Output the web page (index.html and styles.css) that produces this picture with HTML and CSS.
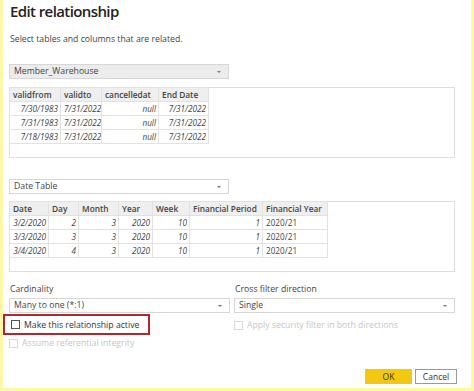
FILE: index.html
```html
<!DOCTYPE html>
<html lang="en">

<head>
  <meta charset="UTF-8">
  <meta name="viewport" content="width=device-width, initial-scale=1.0">
  <title>Edit relationship</title>
  <link rel="stylesheet" href="styles.css">
</head>

<body>
  <div class="dialog">
    <h1>Edit relationship</h1>
    <p class="intro">Select tables and columns that are related.</p>

    <div class="select select-grey">Member_Warehouse<span class="arrow"></span></div>
    <div class="preview preview-one">
      <table class="grid grid-one">
        <tr>
          <th>validfrom</th>
          <th>validto</th>
          <th>cancelledat</th>
          <th>End Date</th>
        </tr>
        <tr>
          <td class="num">7/30/1983</td>
          <td class="num">7/31/2022</td>
          <td class="num">null</td>
          <td class="num">7/31/2022</td>
        </tr>
        <tr>
          <td class="num">7/31/1983</td>
          <td class="num">7/31/2022</td>
          <td class="num">null</td>
          <td class="num">7/31/2022</td>
        </tr>
        <tr>
          <td class="num">7/18/1983</td>
          <td class="num">7/31/2022</td>
          <td class="num">null</td>
          <td class="num">7/31/2022</td>
        </tr>
      </table>
    </div>

    <div class="select select-second">Date Table<span class="arrow"></span></div>
    <div class="preview preview-two">
      <table class="grid grid-two">
        <tr>
          <th>Date</th>
          <th>Day</th>
          <th>Month</th>
          <th>Year</th>
          <th>Week</th>
          <th>Financial Period</th>
          <th>Financial Year</th>
        </tr>
        <tr>
          <td class="num">3/2/2020</td>
          <td class="num">2</td>
          <td class="num">3</td>
          <td class="num">2020</td>
          <td class="num">10</td>
          <td class="num">1</td>
          <td>2020/21</td>
        </tr>
        <tr>
          <td class="num">3/3/2020</td>
          <td class="num">3</td>
          <td class="num">3</td>
          <td class="num">2020</td>
          <td class="num">10</td>
          <td class="num">1</td>
          <td>2020/21</td>
        </tr>
        <tr>
          <td class="num">3/4/2020</td>
          <td class="num">4</td>
          <td class="num">3</td>
          <td class="num">2020</td>
          <td class="num">10</td>
          <td class="num">1</td>
          <td>2020/21</td>
        </tr>
      </table>
    </div>

    <div class="options">
      <div class="option-col">
        <div class="label">Cardinality</div>
        <div class="select">Many to one (*:1)<span class="arrow"></span></div>
        <div class="highlight">
          <span class="check"></span>Make this relationship active
        </div>
        <div class="check-row disabled">
          <span class="check"></span>Assume referential integrity
        </div>
      </div>
      <div class="option-col">
        <div class="label">Cross filter direction</div>
        <div class="select">Single<span class="arrow"></span></div>
        <div class="check-row disabled security">
          <span class="check"></span>Apply security filter in both directions
        </div>
      </div>
    </div>

    <div class="buttons">
      <button class="btn btn-ok">OK</button>
      <button class="btn btn-cancel">Cancel</button>
    </div>
  </div>
</body>

</html>
```

FILE: styles.css
```css
body {
  margin: 0;
  font-family: "Open Sans", "Noto Sans", Arial, sans-serif;
  background-color: #fff;
  color: #333;
}

.dialog {
  width: 474px;
  height: 391px;
  box-sizing: border-box;
  border-left: 3px solid #fdf7a6; /* light yellow frame */
  border-right: 3px solid #fdf7a6;
  border-bottom: 3px solid #fdf7a6;
  padding: 0 17px 0 6px;
}

h1 {
  margin: 0;
  padding: 1px 0 0 1px;
  font-size: 15px;
  font-weight: 600;
  letter-spacing: -0.6px;
  line-height: 21px;
  color: #222;
}

.intro {
  margin: 10px 0 0 1px;
  font-size: 8.7px;
  line-height: 14px;
  color: #444;
}

.select {
  position: relative;
  width: 220px;
  height: 15px;
  box-sizing: border-box;
  border: 1px solid #d6d6d6;
  background-color: #fff;
  padding-left: 4px;
  font-size: 8.7px;
  line-height: 13px;
  color: #444;
}

.select-grey {
  margin-top: 18px;
  background-color: #ececec;
}

.select-second {
  margin-top: 21px;
}

.arrow {
  position: absolute;
  right: 7px;
  top: 6px;
  border-left: 2px solid transparent;
  border-right: 2px solid transparent;
  border-top: 2px solid #777;
}

.preview {
  width: 446px;
  box-sizing: border-box;
  border: 1px solid #dedede;
}

.preview-one {
  margin-top: 8px;
  height: 71px;
}

.preview-two {
  margin-top: 7px;
  height: 71px;
}

.grid {
  border-collapse: collapse;
  table-layout: fixed;
  margin: -1px 0 0 -1px;
}

.grid-one {
  width: 200px;
}

.grid-two {
  width: 319px;
}

.grid th,
.grid td {
  border: 1px solid #e2e2e2;
  height: 13px;
  padding: 0 2px 0 3px;
  line-height: 12px;
  white-space: nowrap;
  overflow: hidden;
  text-align: left;
}

.grid th {
  background-color: #efefef;
  font-size: 8.3px;
  font-weight: 600;
  color: #444;
}

.grid td {
  font-size: 8.2px;
  color: #444;
}

.grid td.num {
  text-align: right;
  font-style: italic;
}

.grid-one th:nth-child(1) { width: 45px; }
.grid-one th:nth-child(2) { width: 35px; }
.grid-one th:nth-child(3) { width: 51px; }
.grid-one th:nth-child(4) { width: 44px; }

.grid-two th:nth-child(1) { width: 33px; }
.grid-two th:nth-child(2) { width: 24px; }
.grid-two th:nth-child(3) { width: 34px; }
.grid-two th:nth-child(4) { width: 28px; }
.grid-two th:nth-child(5) { width: 31px; }
.grid-two th:nth-child(6) { width: 67px; }
.grid-two th:nth-child(7) { width: 59px; }

.options {
  display: flex;
  gap: 4px;
  margin-top: 10px;
}

.option-col {
  width: 221px;
}

.label {
  padding-left: 1px;
  font-size: 8.7px;
  line-height: 14px;
  margin-bottom: 2px;
  color: #444;
}

.option-col .select {
  width: 221px;
}

.highlight {
  display: flex;
  align-items: center;
  width: 147px;
  height: 21px;
  box-sizing: border-box;
  margin: 1px 0 0 -6px;
  padding-left: 6px;
  border: 2px solid #b3262b; /* red callout */
  font-size: 8.7px;
  white-space: nowrap;
  color: #333;
}

.check {
  display: inline-block;
  width: 9px;
  height: 9px;
  box-sizing: border-box;
  border: 1px solid #555;
  margin-right: 4px;
  background-color: #fff;
}

.check-row {
  display: flex;
  align-items: center;
  height: 14px;
  font-size: 8.7px;
  white-space: nowrap;
  margin-top: 1px;
}

.check-row.security {
  margin-top: 5px;
}

.disabled {
  color: #c6c6c6;
}

.disabled .check {
  border-color: #dadada;
}

.buttons {
  display: flex;
  justify-content: flex-end;
  gap: 3px;
  margin: 19px -3px 0 0;
}

.btn {
  height: 15px;
  padding: 0;
  font-family: inherit;
  font-size: 8.5px;
  line-height: 13px;
  color: #333;
  cursor: pointer;
}

.btn-ok {
  width: 47px;
  border: 1px solid #f2c811;
  background-color: #f2c811; /* power bi yellow */
}

.btn-cancel {
  width: 42px;
  border: 1px solid #9a9a9a;
  background-color: #fff;
}
```
